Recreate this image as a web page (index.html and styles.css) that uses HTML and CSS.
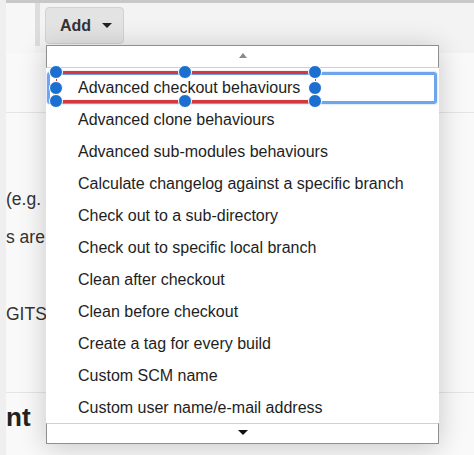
FILE: index.html
```html
<!DOCTYPE html>
<html>
<head>
<meta charset="utf-8">
<link rel="stylesheet" href="styles.css">
</head>
<body>
<div class="page">
  <div class="topbar">
    <div class="gutter"></div>
    <div class="rail"></div>
    <button class="add">Add <span class="caret"></span></button>
  </div>
  <div class="section first"></div>
  <div class="section second">
    <div class="helpcol">
      <p class="help eg">(e.g.</p>
      <p class="help are">s are</p>
      <p class="help gits">GITS</p>
    </div>
  </div>
  <h2 class="heading">nt</h2>
</div>

<div class="menu">
  <div class="scroll up"><span class="tri-up"></span></div>
  <ul class="list">
    <li class="item focused">Advanced checkout behaviours</li>
    <li class="item">Advanced clone behaviours</li>
    <li class="item">Advanced sub-modules behaviours</li>
    <li class="item">Calculate changelog against a specific branch</li>
    <li class="item">Check out to a sub-directory</li>
    <li class="item">Check out to specific local branch</li>
    <li class="item">Clean after checkout</li>
    <li class="item">Clean before checkout</li>
    <li class="item">Create a tag for every build</li>
    <li class="item">Custom SCM name</li>
    <li class="item">Custom user name/e-mail address</li>
  </ul>
  <div class="scroll down"><span class="tri-down"></span></div>
</div>

<div class="annot">
  <div class="rline top"></div>
  <div class="rline bottom"></div>
  <div class="vdash left"></div>
  <div class="vdash right"></div>
  <span class="dot d1"></span>
  <span class="dot d2"></span>
  <span class="dot d3"></span>
  <span class="dot d4"></span>
  <span class="dot d5"></span>
  <span class="dot d6"></span>
  <span class="dot d7"></span>
  <span class="dot d8"></span>
</div>
</body>
</html>
```

FILE: styles.css
```css
html, body {
  margin: 0;
  padding: 0;
}
body {
  width: 474px;
  height: 455px;
  overflow: hidden;
  background: #f9f9f9;
  font-family: "Liberation Sans", Arial, Helvetica, sans-serif;
  color: #333;
  position: relative;
}
.page {
  border-left: 6px solid #efefef;
  height: 455px;
  box-sizing: border-box;
}
.topbar {
  border-top: 3px solid #c8c8c8;
  height: 50px;
  background: #f3f3f3;
  display: flex;
  align-items: flex-start;
}
.gutter {
  width: 29px;
  height: 50px;
  background: #f7f7f7;
}
.rail {
  width: 5px;
  height: 43px;
  background: #dddddd;
}
.add {
  margin: 4px 0 0 5px;
  width: 79px;
  height: 37px;
  background: #e3e3e3;
  border: 1px solid #d2d2d2;
  border-radius: 4px;
  font-family: "Liberation Sans", Arial, sans-serif;
  font-weight: bold;
  font-size: 16px;
  color: #333;
  text-align: left;
  padding: 0 0 0 14px;
  display: flex;
  align-items: center;
  gap: 10px;
}
.caret {
  display: inline-block;
  width: 0;
  height: 0;
  border-left: 5px solid transparent;
  border-right: 5px solid transparent;
  border-top: 5px solid #222;
  margin-left: 1px;
}
.section {
  border-bottom: 1px solid #e4e4e4;
}
.section.first {
  height: 59px;
  background: #f9f9f9;
}
.section.second {
  height: 279px;
  background: #f9f9f9;
}
.helpcol {
  width: 40px;
}
.help {
  margin: 0;
  font-size: 17.5px;
  line-height: 20px;
  color: #333;
  white-space: nowrap;
}
.help.eg { padding-top: 76px; }
.help.are { padding-top: 18px; }
.help.gits { padding-top: 57px; }
.heading {
  margin: 0;
  padding: 12px 0 0 0;
  font-size: 26px;
  line-height: 24px;
  font-weight: bold;
  color: #222;
}

/* dropdown menu (overlay) */
.menu {
  position: absolute;
  left: 46px;
  top: 45px;
  width: 393px;
  background: #fff;
  box-shadow: 0 3px 26px rgba(0, 0, 0, 0.2);
}
.scroll {
  box-sizing: border-box;
  background: #fff;
  border: 1px solid #8f8f8f;
  display: flex;
  justify-content: center;
  align-items: center;
}
.scroll.up {
  height: 23px;
  border-bottom-color: #d0d0d0;
}
.scroll.down {
  height: 21px;
  border-top-color: #d0d0d0;
}
.tri-up {
  width: 0; height: 0;
  border-left: 4px solid transparent;
  border-right: 4px solid transparent;
  border-bottom: 5px solid #8a8a8a;
  margin-top: -2px;
}
.tri-down {
  width: 0; height: 0;
  border-left: 5px solid transparent;
  border-right: 5px solid transparent;
  border-top: 5px solid #111;
  margin-top: -2px;
}
.list {
  list-style: none;
  margin: 0;
  padding: 4px 0 0 0;
  height: 355px;
  box-sizing: border-box;
  overflow: hidden;
}
.item {
  position: relative;
  height: 32px;
  line-height: 32px;
  padding-left: 32px;
  font-size: 16px;
  color: #1e1e1e;
  white-space: nowrap;
}
.item.focused::after {
  content: "";
  position: absolute;
  left: 1px;
  right: 2px;
  top: 0;
  bottom: 0;
  border: 3px solid #6fa5ec;
  border-radius: 3px;
  box-shadow: 0 0 2px rgba(80, 140, 230, 0.6);
}

/* selection annotation overlay */
.annot {
  position: absolute;
  left: 0;
  top: 0;
}
.rline {
  position: absolute;
  left: 56px;
  width: 259px;
  height: 3px;
  background: #d5383c;
  box-shadow: 0 0 1px rgba(213, 56, 60, 0.5);
}
.rline.top { top: 71px; }
.rline.bottom { top: 100px; }
.vdash {
  position: absolute;
  top: 73px;
  height: 28px;
  width: 0;
  border-left: 1px dashed #d5383c;
}
.vdash.left { left: 56px; }
.vdash.right { left: 315px; }
.dot {
  position: absolute;
  width: 12px;
  height: 12px;
  margin: -7px 0 0 -7px;
  border-radius: 50%;
  background: #1b6fd0;
  border: 1px solid #fff;
}
.d1 { left: 56px; top: 72px; }
.d2 { left: 185px; top: 72px; }
.d3 { left: 315px; top: 72px; }
.d4 { left: 56px; top: 88px; }
.d5 { left: 315px; top: 88px; }
.d6 { left: 56px; top: 101px; }
.d7 { left: 185px; top: 101px; }
.d8 { left: 315px; top: 101px; }
```
